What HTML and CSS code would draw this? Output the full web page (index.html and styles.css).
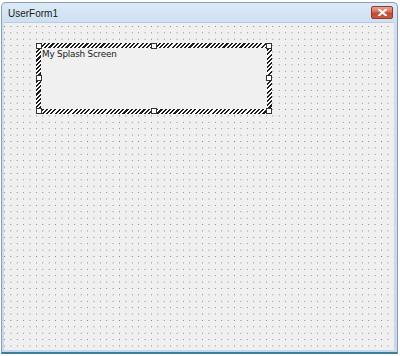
FILE: index.html
```html
<!DOCTYPE html>
<html>
<head>
<meta charset="utf-8">
<link rel="stylesheet" href="styles.css">
</head>
<body>
<div class="window">
  <div class="titlebar">
    <span class="title">UserForm1</span>
    <button class="close" aria-label="Close">
      <svg width="9" height="7" viewBox="0 0 9 7"><path d="M1 0.5 L8 6.5 M8 0.5 L1 6.5" stroke="#fff" stroke-width="2" stroke-linecap="square"/></svg>
    </button>
  </div>
  <div class="client">
    <div class="frame">
      <div class="label">My Splash Screen</div>
      <span class="handle h-tl"></span>
      <span class="handle h-tm"></span>
      <span class="handle h-tr"></span>
      <span class="handle h-ml"></span>
      <span class="handle h-mr"></span>
      <span class="handle h-bl"></span>
      <span class="handle h-bm"></span>
      <span class="handle h-br"></span>
    </div>
  </div>
</div>
</body>
</html>
```
FILE: styles.css
```css
html, body {
  margin: 0;
  padding: 0;
  background: #ffffff;
}
body {
  width: 400px;
  height: 356px;
  overflow: hidden;
  font-family: "Liberation Sans", Arial, sans-serif;
}
.window {
  box-sizing: border-box;
  margin: 2px 0 0 1px;
  width: 397px;
  height: 352px;
  border: 1px solid #8a9db5;
  border-bottom: 2px solid #3f7d9c;
  border-radius: 5px 5px 0 0;
  background: linear-gradient(to bottom, #dde9f6 0px, #cddff2 20px, #c6d9ee 100%);
  display: flex;
  flex-direction: column;
  padding: 0 3px 2px 2px;
}
.titlebar {
  height: 19px;
  flex: none;
  display: flex;
  align-items: flex-start;
  justify-content: space-between;
}
.title {
  font-size: 10px;
  color: #1a1a1a;
  padding: 5px 0 0 4px;
  line-height: 12px;
}
.close {
  box-sizing: border-box;
  width: 22px;
  height: 13px;
  margin: 3px 1px 0 0;
  padding: 0;
  border: 1px solid #8e3a2e;
  border-radius: 2px;
  background: linear-gradient(to bottom, #e8a392 0%, #d4705c 45%, #c24a33 55%, #c85a3e 100%);
  display: flex;
  align-items: center;
  justify-content: center;
}
.close svg { display: block; }
.client {
  flex: 1;
  background-color: #f0f0f0;
  background-image: conic-gradient(at 1px 1px, transparent 270deg, #787878 0);
  background-size: 6.4px 6.4px;
  background-position: 0px 3px;
  border-top: 1px solid #b9cbe0;
}
.frame {
  position: relative;
  box-sizing: border-box;
  margin: 20px 0 0 32px;
  width: 236px;
  height: 71px;
  padding: 5px;
  background: repeating-linear-gradient(135deg, #1e1e1e 0 1.5px, #ffffff 1.5px 3px);
}
.label {
  height: 100%;
  background: #f0f0f0;
  font-family: "DejaVu Sans", "Liberation Sans", sans-serif;
  font-size: 8.8px;
  color: #202020;
  line-height: 11px;
  padding: 1px 0 0 1px;
  box-sizing: border-box;
  letter-spacing: -0.2px;
}
.handle {
  position: absolute;
  box-sizing: border-box;
  width: 6px;
  height: 6px;
  background: #ffffff;
  border: 1px solid #333333;
}
.h-tl { left: 0; top: 0; }
.h-tm { left: 115px; top: 0; }
.h-tr { right: 0; top: 0; }
.h-ml { left: 0; top: 32px; }
.h-mr { right: 0; top: 32px; }
.h-bl { left: 0; bottom: 0; }
.h-bm { left: 115px; bottom: 0; }
.h-br { right: 0; bottom: 0; }
```
